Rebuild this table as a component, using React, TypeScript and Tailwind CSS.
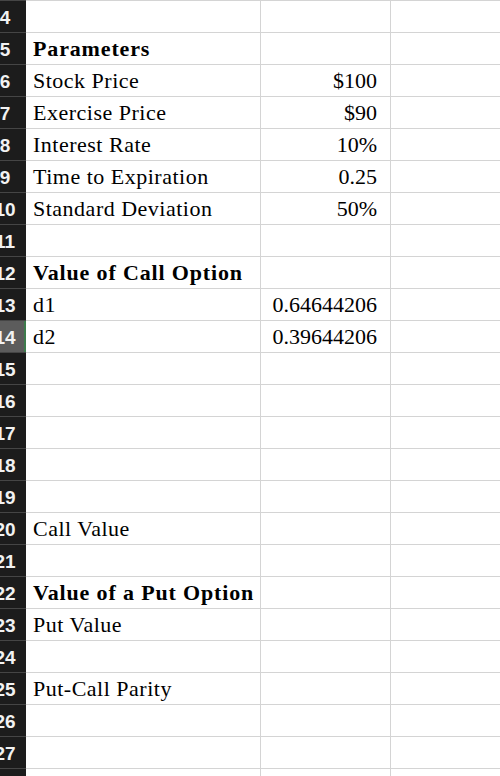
import React from "react"

type Row = {
  n: number
  label?: string
  value?: string
  bold?: boolean
}

const rows: Row[] = [
  { n: 4 },
  { n: 5, label: "Parameters", bold: true },
  { n: 6, label: "Stock Price", value: "$100" },
  { n: 7, label: "Exercise Price", value: "$90" },
  { n: 8, label: "Interest Rate", value: "10%" },
  { n: 9, label: "Time to Expiration", value: "0.25" },
  { n: 10, label: "Standard Deviation", value: "50%" },
  { n: 11 },
  { n: 12, label: "Value of Call Option", bold: true },
  { n: 13, label: "d1", value: "0.64644206" },
  { n: 14, label: "d2", value: "0.39644206" },
  { n: 15 },
  { n: 16 },
  { n: 17 },
  { n: 18 },
  { n: 19 },
  { n: 20, label: "Call Value" },
  { n: 21 },
  { n: 22, label: "Value of a Put Option", bold: true },
  { n: 23, label: "Put Value" },
  { n: 24 },
  { n: 25, label: "Put-Call Parity" },
  { n: 26 },
  { n: 27 },
  { n: 28 }
]

const SELECTED = 14

function RowHeader({ n }: { n: number }) {
  const selected = n === SELECTED
  return (
    <div
      className={
        "relative w-[26px] h-full shrink-0 overflow-hidden border-b border-[#454545] " +
        (selected ? "bg-[#5c5c5c]" : "bg-[#1c1c1c]")
      }>
      <div className="w-[42px] -ml-[16px] text-center font-['Liberation_Sans',Arial,sans-serif] font-bold text-[19px] leading-[34px] text-[#f2f2f2]">
        {n}
      </div>
      {selected && (
        <div className="absolute right-0 top-0 h-full w-[2px] bg-[#3c7b4c]"></div>
      )}
    </div>
  )
}

function SheetRow({ row }: { row: Row }) {
  return (
    <div className="flex h-8 w-full">
      <RowHeader n={row.n} />
      <div
        className={
          "w-[235px] shrink-0 whitespace-nowrap border-b border-r border-[#d4d4d4] pl-[7px] text-[22px] leading-[32px] text-black " +
          (row.bold ? "font-bold tracking-[0.85px]" : "tracking-[0.5px]")
        }>
        {row.label}
      </div>
      <div className="w-[130px] shrink-0 border-b border-r border-[#d4d4d4] pr-[13px] text-right text-[22px] leading-[32px] text-black">
        {row.value}
      </div>
      <div className="flex-1 border-b border-[#d4d4d4]"></div>
    </div>
  )
}

export default function App() {
  return (
    <div className="w-[500px] h-[776px] overflow-hidden bg-white font-['Liberation_Serif','Times_New_Roman',serif]">
      <div className="flex h-px w-full">
        <div className="w-[26px] bg-[#454545]"></div>
        <div className="flex-1 bg-[#d4d4d4]"></div>
      </div>
      {rows.map((row) => (
        <SheetRow key={row.n} row={row} />
      ))}
    </div>
  )
}
